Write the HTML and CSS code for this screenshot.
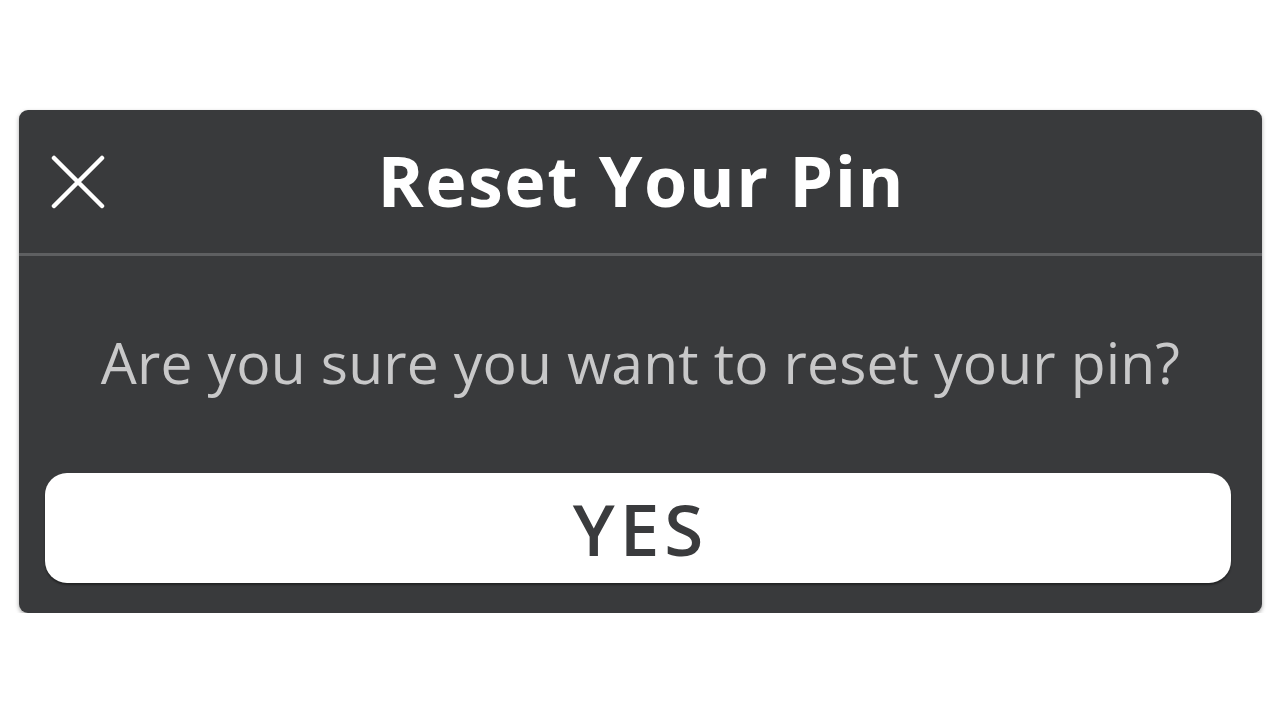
FILE: index.html
```html
<!DOCTYPE html>
<html>
<head>
<meta charset="utf-8">
<link rel="stylesheet" href="styles.css">
</head>
<body>
<div class="dialog">
  <div class="header">
    <button class="close" aria-label="Close">
      <svg width="54" height="54" viewBox="0 0 54 54"><path d="M3 3 L51 51 M51 3 L3 51" stroke="#fff" stroke-width="4.5" stroke-linecap="round" fill="none"/></svg>
    </button>
    <h1 class="title">Reset Your Pin</h1>
  </div>
  <div class="sep"></div>
  <p class="message">Are you sure you want to reset your pin?</p>
  <div class="actions">
    <button class="yes">YES</button>
  </div>
</div>
</body>
</html>
```
FILE: styles.css
```css
html, body { margin: 0; padding: 0; background: #fff; }
body { font-family: "Open Sans", "Liberation Sans", sans-serif; }
.dialog {
  margin: 110px 0 0 19px;
  width: 1243px;
  height: 503px;
  background: #393a3c;
  border-radius: 9px;
  box-shadow: 0 2px 4px rgba(0,0,0,0.35);
  display: flex;
  flex-direction: column;
}
.header {
  height: 143px;
  display: flex;
  align-items: center;
  justify-content: center;
  position: relative;
}
.close {
  position: absolute;
  left: 32px;
  top: 45px;
  padding: 0; margin: 0; border: 0; background: none;
  width: 54px; height: 54px;
  display: block;
}
.close svg { display: block; }
.title {
  margin: 0;
  color: #fff;
  font-family: "Open Sans", "Liberation Sans", sans-serif;
  font-size: 70px;
  font-weight: 700;
  letter-spacing: 1.5px;
  line-height: 1;
  padding-left: 1.5px;
  padding-bottom: 3px;
}
.sep { height: 3px; background: #5e5f61; }
.message {
  margin: 0;
  height: 217px;
  display: flex;
  align-items: center;
  justify-content: center;
  color: #c8c8c9;
  font-family: "Open Sans", "Liberation Sans", sans-serif;
  font-size: 57px;
  letter-spacing: 0.15px;
  padding-bottom: 6px;
  box-sizing: border-box;
}
.actions { padding: 0 31px 0 26px; }
.yes {
  display: block;
  width: 100%;
  height: 110px;
  border: 0;
  border-radius: 22px;
  background: #fff;
  box-shadow: 0 2px 2px rgba(0,0,0,0.4);
  color: #3a3b3d;
  font-family: "Open Sans", "Liberation Sans", sans-serif;
  font-size: 71px;
  font-weight: 600;
  letter-spacing: 5px;
  padding: 0 0 0 5px;
}
```
